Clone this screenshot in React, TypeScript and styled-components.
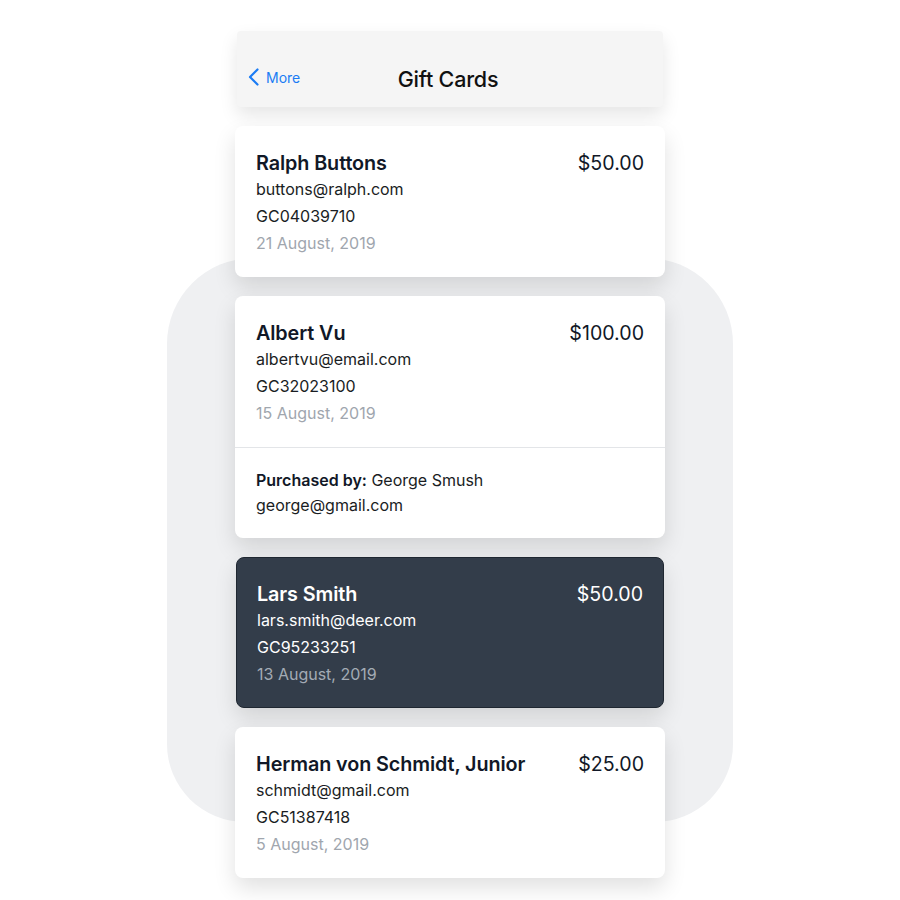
import React from 'react';
import styled, { createGlobalStyle } from 'styled-components';

const GlobalStyle = createGlobalStyle`
  body {
    margin: 0;
    background: #ffffff;
    font-family: Inter, "Helvetica Neue", Arial, sans-serif;
    -webkit-font-smoothing: antialiased;
  }
`;

const Page = styled.div`
  display: flex;
  justify-content: center;
  padding-top: 31px;
  padding-bottom: 40px;
`;

const Stage = styled.div`
  position: relative;
  width: 430px;
  display: flex;
  flex-direction: column;
  gap: 19px;
`;

// decorative grey slab sitting behind the list
const Backdrop = styled.div`
  position: absolute;
  left: -68px;
  right: -68px;
  top: 227px;
  height: 564px;
  background: #eff0f2;
  border-radius: 86px 86px 78px 78px;
  z-index: 0;
`;

const NavBar = styled.header`
  position: relative;
  z-index: 1;
  margin: 0 2px;
  height: 76px;
  background: #f5f5f5;
  border-radius: 4px;
  box-shadow: 0 8px 18px rgba(0, 0, 0, 0.1);
  display: flex;
  align-items: flex-end;
  justify-content: center;
  padding-bottom: 15px;
  box-sizing: border-box;
`;

const BackLink = styled.a`
  position: absolute;
  left: 11px;
  bottom: 21px;
  display: flex;
  align-items: center;
  gap: 7px;
  color: #1b7cf4;
  font-size: 14px;
  text-decoration: none;
`;

const NavTitle = styled.h1`
  margin: 0 4px 0 0;
  font-size: 21.5px;
  font-weight: 500;
  color: #111111;
  letter-spacing: -0.2px;
`;

const Card = styled.div<{ $dark?: boolean }>`
  position: relative;
  z-index: 1;
  margin: ${p => (p.$dark ? '0 1px' : '0')};
  background: ${p => (p.$dark ? '#333d4a' : '#ffffff')};
  border: ${p => (p.$dark ? '1px solid #1f2731' : 'none')};
  border-radius: 8px;
  box-shadow: 0 10px 22px rgba(0, 0, 0, 0.12);
  color: ${p => (p.$dark ? '#ffffff' : '#111827')};
  overflow: hidden;
`;

const CardBody = styled.div<{ $dark?: boolean }>`
  padding: ${p => (p.$dark ? '23px 20px 19px' : '24px 21px 20px')};
`;

const TopRow = styled.div`
  display: flex;
  justify-content: space-between;
  align-items: center;
  height: 26px;
`;

const Name = styled.div`
  font-size: 19.8px;
  font-weight: 600;
  letter-spacing: -0.1px;
`;

const Price = styled.div`
  font-size: 19.6px;
  font-weight: 400;
`;

const Line = styled.div<{ $muted?: boolean; $dark?: boolean }>`
  font-size: 16px;
  line-height: 27px;
  color: ${p => (p.$muted ? (p.$dark ? '#a3abb5' : '#a0a6ae') : p.$dark ? '#ffffff' : '#1a1d23')};
`;

const Footer = styled.div`
  border-top: 1px solid #e3e5e8;
  padding: 20px 21px 20px;
`;

const FooterLine = styled.div`
  font-size: 16px;
  line-height: 25px;
  color: #1a1d23;

  b {
    font-weight: 600;
    color: #111827;
  }
`;

type GiftCard = {
  name: string;
  price: string;
  email: string;
  code: string;
  date: string;
  dark?: boolean;
  buyer?: { name: string; email: string };
};

const cards: GiftCard[] = [
  { name: 'Ralph Buttons', price: '$50.00', email: 'buttons@ralph.com', code: 'GC04039710', date: '21 August, 2019' },
  {
    name: 'Albert Vu',
    price: '$100.00',
    email: 'albertvu@email.com',
    code: 'GC32023100',
    date: '15 August, 2019',
    buyer: { name: 'George Smush', email: 'george@gmail.com' },
  },
  { name: 'Lars Smith', price: '$50.00', email: 'lars.smith@deer.com', code: 'GC95233251', date: '13 August, 2019', dark: true },
  { name: 'Herman von Schmidt, Junior', price: '$25.00', email: 'schmidt@gmail.com', code: 'GC51387418', date: '5 August, 2019' },
];

function Chevron() {
  return (
    <svg width="11" height="18" viewBox="0 0 11 18" fill="none">
      <path d="M9.5 1.5 L2 9 L9.5 16.5" stroke="#1b7cf4" strokeWidth="2.2" strokeLinecap="round" strokeLinejoin="round" />
    </svg>
  );
}

export default function App() {
  return (
    <Page>
      <GlobalStyle />
      <Stage>
        <Backdrop />
        <NavBar>
          <BackLink href="#">
            <Chevron />
            More
          </BackLink>
          <NavTitle>Gift Cards</NavTitle>
        </NavBar>

        {cards.map(c => (
          <Card key={c.code} $dark={c.dark}>
            <CardBody $dark={c.dark}>
              <TopRow>
                <Name>{c.name}</Name>
                <Price>{c.price}</Price>
              </TopRow>
              <Line $dark={c.dark}>{c.email}</Line>
              <Line $dark={c.dark}>{c.code}</Line>
              <Line $dark={c.dark} $muted>{c.date}</Line>
            </CardBody>
            {c.buyer && (
              <Footer>
                <FooterLine>
                  <b>Purchased by:</b> {c.buyer.name}
                </FooterLine>
                <FooterLine>{c.buyer.email}</FooterLine>
              </Footer>
            )}
          </Card>
        ))}
      </Stage>
    </Page>
  );
}
